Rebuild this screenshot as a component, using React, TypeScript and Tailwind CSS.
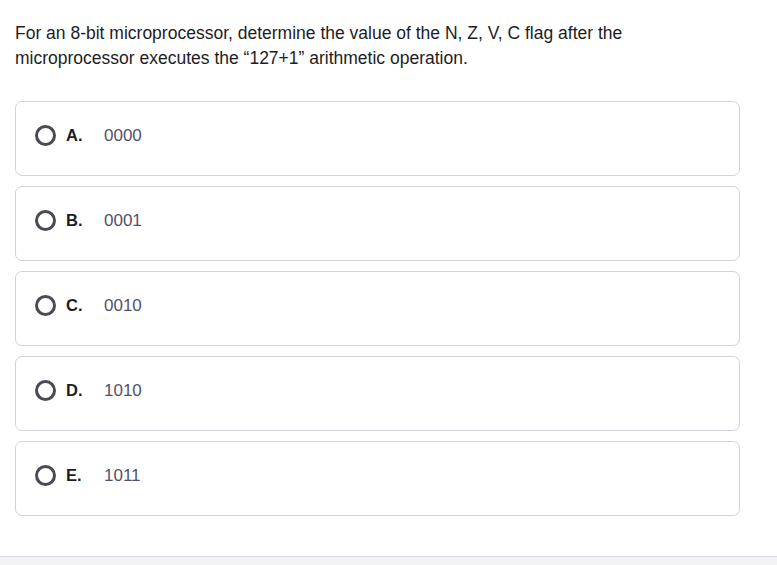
import React from 'react';

const options = [
  { key: 'A', value: '0000' },
  { key: 'B', value: '0001' },
  { key: 'C', value: '0010' },
  { key: 'D', value: '1010' },
  { key: 'E', value: '1011' },
];

const App: React.FC = () => {
  return (
    <div className="w-[777px] h-[565px] bg-white flex flex-col overflow-hidden font-['Liberation_Sans',Arial,sans-serif]">
      <div className="flex-1 pl-[15px] pr-[30px] pt-[21px]">
        <p className="text-[17.5px] leading-[25px] text-[#1d1d1f]">
          For an 8-bit microprocessor, determine the value of the N, Z, V, C flag after the
          <br />
          microprocessor executes the “127+1” arithmetic operation.
        </p>

        <div className="mt-[30px] w-[725px] flex flex-col gap-[10px]">
          {options.map((opt) => (
            <label
              key={opt.key}
              className="h-[75px] flex items-center rounded-[7px] border border-[#d2d2da] pl-[19px] pb-[6px]"
            >
              <span className="w-[21px] h-[21px] rounded-full border-[3px] border-[#4a4a57] shrink-0" />
              <span className="ml-[10px] w-[38px] text-[16.5px] font-bold text-[#1d1d1f]">{opt.key}.</span>
              <span className="text-[17px] text-[#50526a]">{opt.value}</span>
            </label>
          ))}
        </div>
      </div>
      <div className="h-[9px] border-t border-[#dcdce4] bg-[#f3f3f6]" />
    </div>
  );
};

export default App;
